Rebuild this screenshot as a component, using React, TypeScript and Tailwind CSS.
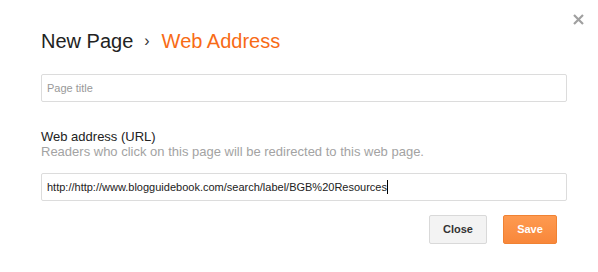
export default function App() {
  return (
    <div className="relative h-[272px] w-[598px] bg-white font-['Liberation_Sans',Arial,sans-serif]">
      <button className="absolute right-[14px] top-[14px] flex h-[11px] w-[11px] items-center justify-center text-[#a0a0a0]">
        <svg width="11" height="11" viewBox="0 0 11 11">
          <path d="M1 1 L10 10 M10 1 L1 10" stroke="currentColor" strokeWidth="2.2" />
        </svg>
      </button>

      <div className="px-[41px] pr-[31px] pt-[29px]">
        <h1 className="flex items-center text-[20px] leading-[24px] text-[#222]">
          <span>New Page</span>
          <span className="ml-[11px] mr-[12px] text-[16px] text-[#333]">›</span>
          <span className="text-[#f86b16]">Web Address</span>
        </h1>

        <input
          placeholder="Page title"
          className="mt-[21px] block h-[28px] w-full rounded-[2px] border border-[#dcdcdc] px-[5px] text-[11px] text-[#222] placeholder:text-[#999] outline-none"
        />

        <div className="mt-[27px] text-[13px] leading-[15px]">
          <div className="text-[#222]">Web address (URL)</div>
          <div className="text-[#a3a3a3]">Readers who click on this page will be redirected to this web page.</div>
        </div>

        <div className="relative mt-[14px]">
          <input
            defaultValue="http://http://www.blogguidebook.com/search/label/BGB%20Resources"
            className="block h-[28px] w-full rounded-[2px] border border-[#dcdcdc] px-[5px] text-[11px] text-[#222] outline-none"
          />
          <span className="absolute left-[346px] top-[7px] h-[14px] w-px bg-black" />
        </div>

        <div className="mr-[10px] mt-[14px] flex justify-end gap-[16px]">
          <button className="h-[29px] w-[58px] rounded-[2px] border border-[#d9d9d9] bg-[#f3f3f3] text-[11px] font-bold text-[#333]">
            Close
          </button>
          <button className="h-[29px] w-[54px] rounded-[2px] border border-[#f08233] bg-gradient-to-b from-[#fe9a50] to-[#f8873a] text-[11px] font-bold text-white">
            Save
          </button>
        </div>
      </div>
    </div>
  )
}
